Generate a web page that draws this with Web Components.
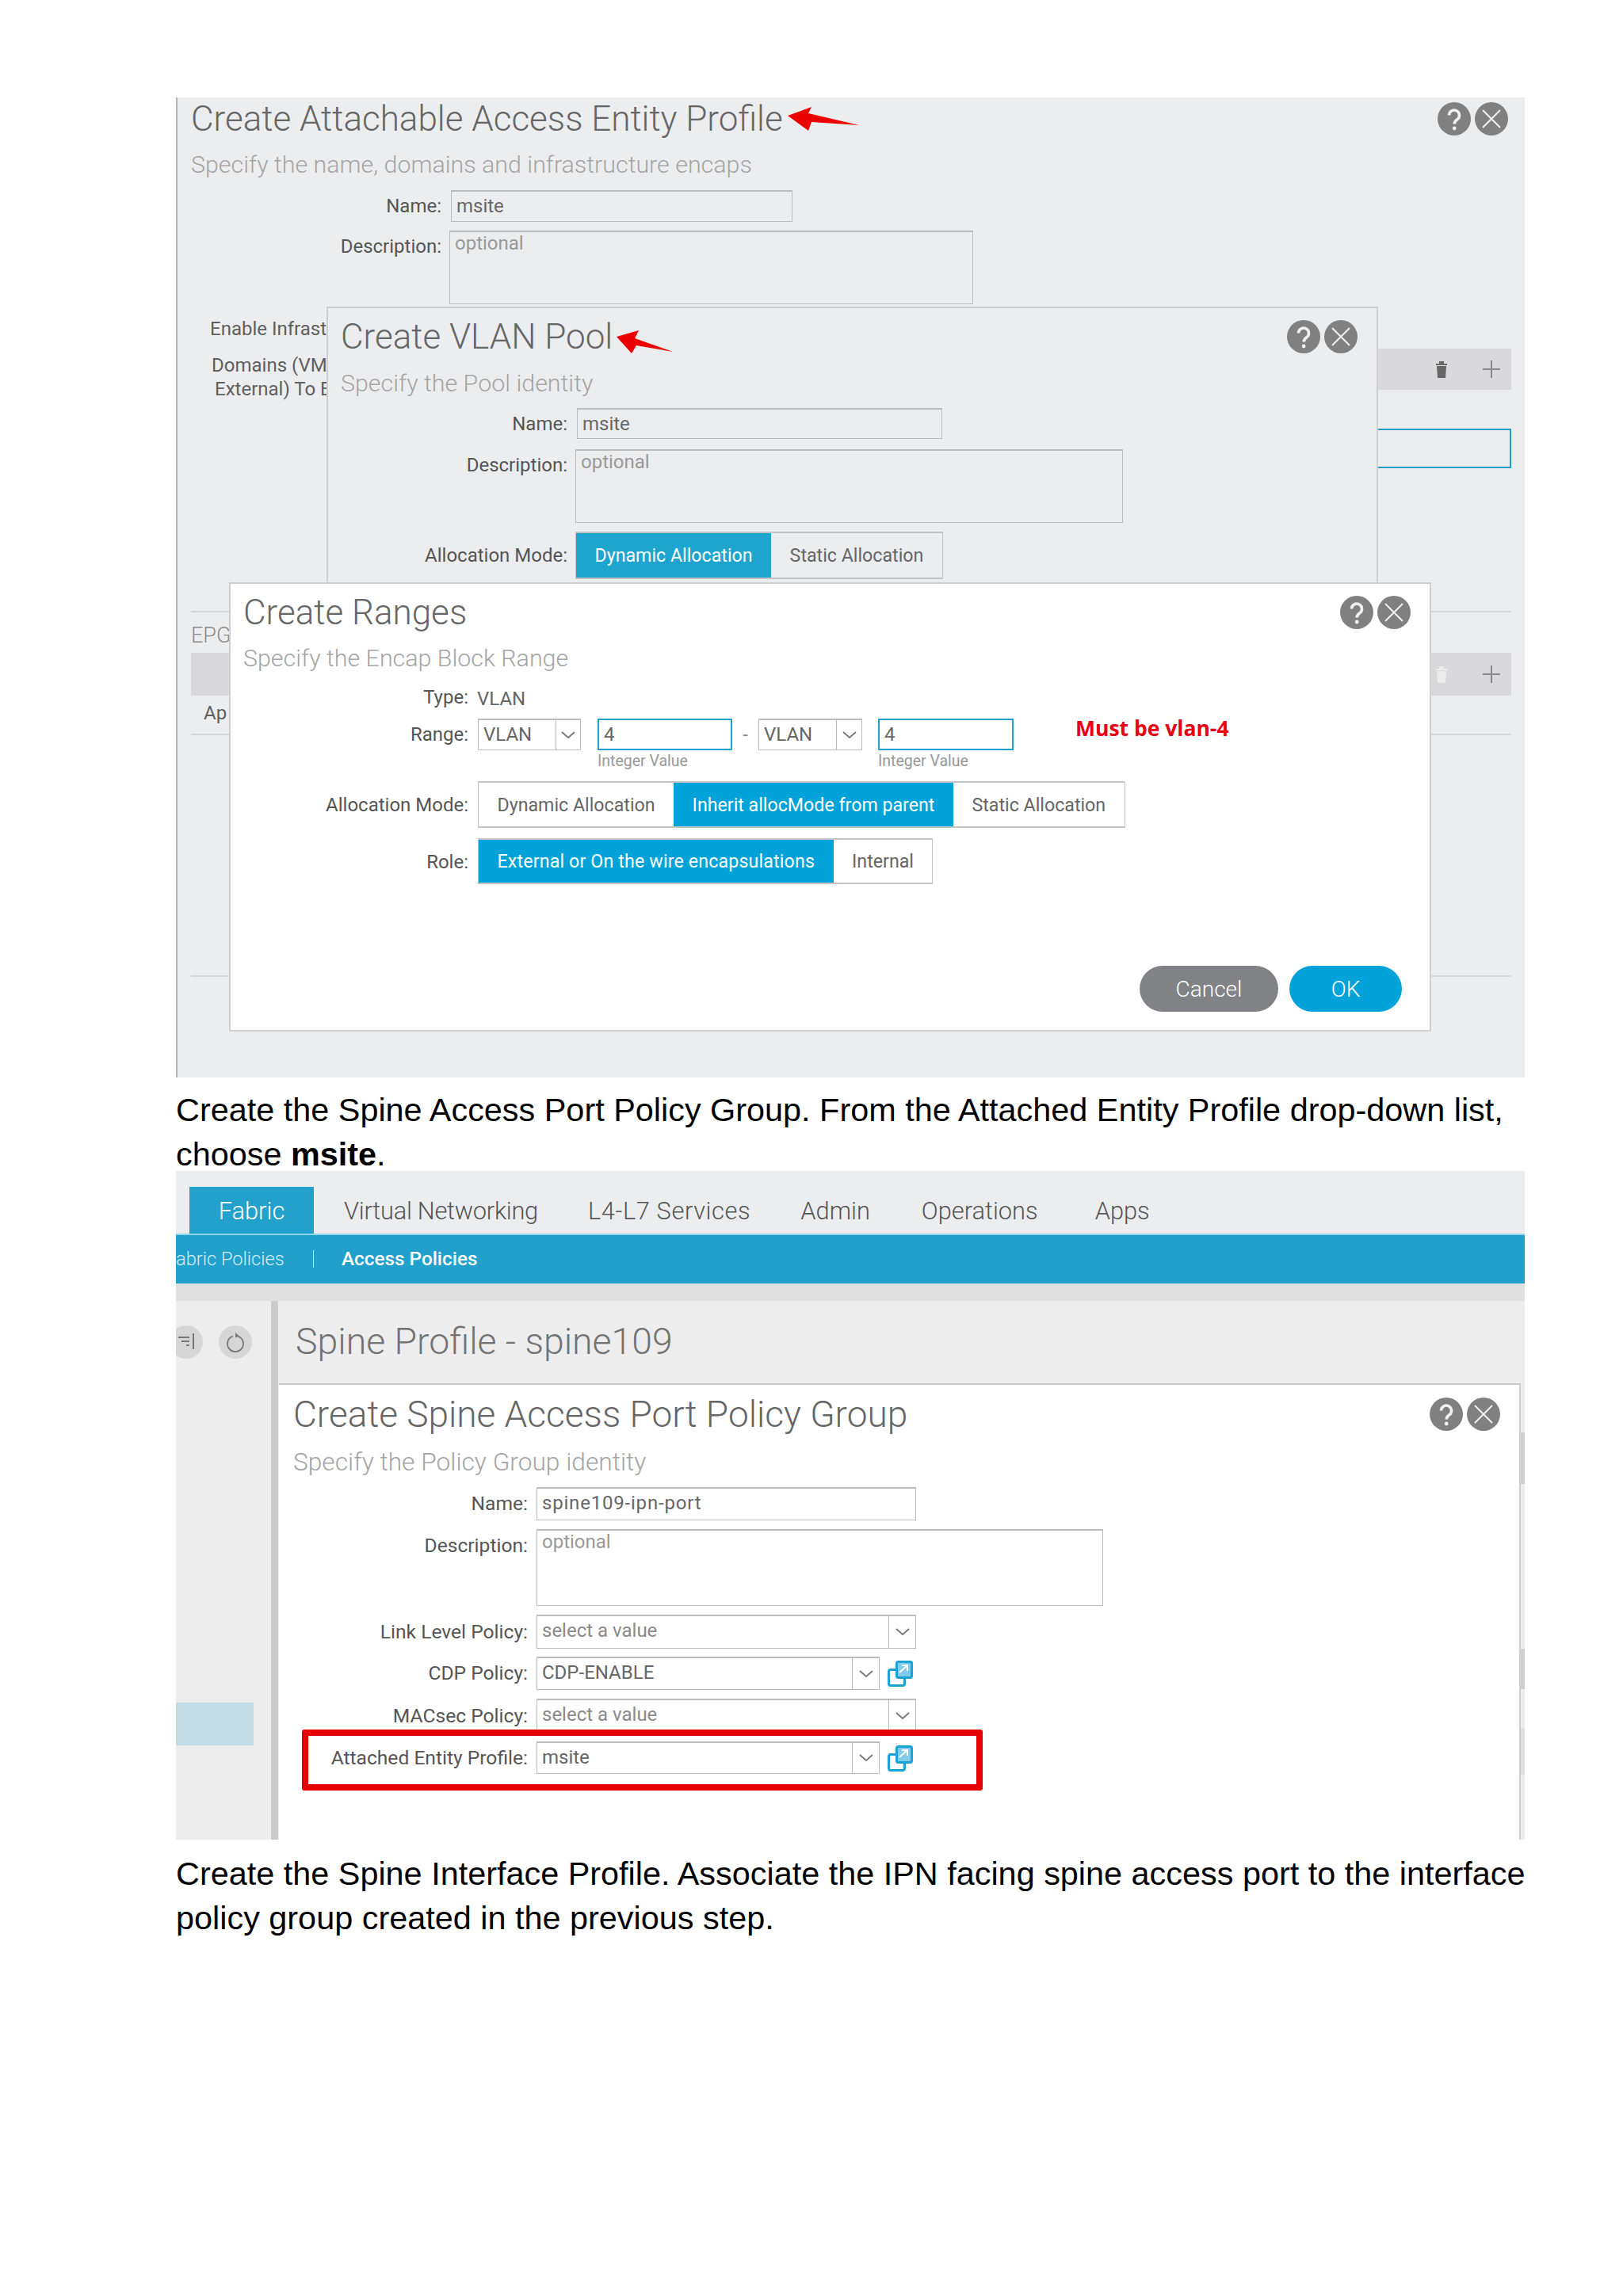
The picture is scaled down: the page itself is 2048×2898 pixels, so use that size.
<!DOCTYPE html>
<html>
<head>
<meta charset="utf-8">
<title>Spine access port policy group</title>
<style>
  html, body { margin: 0; background: #fff; }
</style>
</head>
<body>
<doc-page>
  <aci-panel class="first">
    <aci-dialog heading="Create Attachable Access Entity Profile" sub="Specify the name, domains and infrastructure encaps" arrow="tall" flat
      style="--pt:3px;--sg:14px;--sb:12px;--pl:17px;--pr:17px;--ir:4px;--lw:316px;--cg:10px">
      <aci-row label="Name:"><aci-input value="msite" style="width:431px;height:40px;margin-left:2px"></aci-input></aci-row>
      <aci-row label="Description:" style="margin-top:11px"><aci-input placeholder="optional" area style="width:661px;height:93px"></aci-input></aci-row>
      <aci-caption style="margin:19px 0 0 24px">Enable Infrast</aci-caption>
      <div style="display:grid;grid-template-columns:316px 1fr;column-gap:10px;margin-top:19px">
        <div>
          <aci-caption style="margin-left:26px;line-height:30px">Domains (VMI</aci-caption>
          <aci-caption style="margin-left:30px;line-height:30px">External) To E</aci-caption>
        </div>
        <div style="margin-top:-6px">
          <aci-toolbar></aci-toolbar>
          <aci-input focus style="display:block;height:50px;margin-top:49px"></aci-input>
        </div>
      </div>
      <aci-rule style="margin-top:180px"></aci-rule>
      <aci-caption muted style="margin-top:17px">EPG</aci-caption>
      <aci-toolbar faded style="margin-top:10px;height:54px"></aci-toolbar>
      <aci-caption style="margin:10px 0 0 16px">Ap</aci-caption>
      <aci-rule style="margin-top:14px"></aci-rule>
      <aci-rule style="margin-top:303px"></aci-rule>
    </aci-dialog>

    <aci-dialog heading="Create VLAN Pool" sub="Specify the Pool identity" arrow="short" overlay
      style="left:188px;top:264px;width:1327px;height:360px;--pt:12px;--sg:15px;--sb:11px;--pl:16px;--pr:22px;--ir:2px;--lw:286px;--cg:10px">
      <aci-row label="Name:"><aci-input value="msite" style="width:461px;height:39px;margin-left:2px"></aci-input></aci-row>
      <aci-row label="Description:" style="margin-top:12px"><aci-input placeholder="optional" area style="width:691px;height:93px"></aci-input></aci-row>
      <aci-row label="Allocation Mode:" style="margin-top:11px;--h:60px">
        <aci-seg style="height:60px;--on:#1ea5cf">
          <aci-seg-btn active>Dynamic Allocation</aci-seg-btn>
          <aci-seg-btn>Static Allocation</aci-seg-btn>
        </aci-seg>
      </aci-row>
    </aci-dialog>

    <aci-dialog heading="Create Ranges" sub="Specify the Encap Block Range" overlay white
      style="left:65px;top:612px;width:1517px;height:567px;--pt:12px;--sg:14px;--sb:17px;--pl:16px;--pr:22px;--ir:2px;--lw:284px;--cg:12px">
      <aci-row label="Type:" style="--h:24px"><span style="color:#666;margin-left:-1px">VLAN</span></aci-row>
      <aci-row label="Range:" style="margin-top:11px">
        <div style="display:flex;align-items:flex-start">
          <aci-select value="VLAN" style="width:130px;height:40px;--cw:31px"></aci-select>
          <aci-input focus value="4" hint="Integer Value" style="width:170px;height:40px;margin-left:21px"></aci-input>
          <span style="width:33px;text-align:center;line-height:40px;color:#888">-</span>
          <aci-select value="VLAN" style="width:131px;height:40px;--cw:32px"></aci-select>
          <aci-input focus value="4" hint="Integer Value" style="width:171px;height:40px;margin-left:20px"></aci-input>
          <red-note style="margin-left:78px">Must be vlan-4</red-note>
        </div>
      </aci-row>
      <aci-row label="Allocation Mode:" style="margin-top:39px;--h:60px">
        <aci-seg style="height:59px">
          <aci-seg-btn>Dynamic Allocation</aci-seg-btn>
          <aci-seg-btn active>Inherit allocMode from parent</aci-seg-btn>
          <aci-seg-btn>Static Allocation</aci-seg-btn>
        </aci-seg>
      </aci-row>
      <aci-row label="Role:" style="margin-top:12px;--h:60px">
        <aci-seg style="height:58px">
          <aci-seg-btn active style="letter-spacing:.15px">External or On the wire encapsulations</aci-seg-btn>
          <aci-seg-btn>Internal</aci-seg-btn>
        </aci-seg>
      </aci-row>
      <div slot="footer" style="display:flex;gap:14px;justify-content:flex-end">
        <aci-button style="width:175px;background:#808285">Cancel</aci-button>
        <aci-button style="width:142px;background:#00a3d9">OK</aci-button>
      </div>
    </aci-dialog>
  </aci-panel>

  <doc-para style="margin:14px -12px -7px 0"><span style="display:block">Create the Spine Access Port Policy Group. From the Attached Entity Profile drop-down list,</span><span style="display:block">choose <b>msite</b>.</span></doc-para>

  <aci-panel>
    <aci-tabs>
      <aci-tab active>Fabric</aci-tab>
      <aci-tab style="letter-spacing:-.25px">Virtual Networking</aci-tab>
      <aci-tab style="letter-spacing:.6px">L4-L7 Services</aci-tab>
      <aci-tab>Admin</aci-tab>
      <aci-tab style="margin-left:2px">Operations</aci-tab>
      <aci-tab style="margin-left:9px">Apps</aci-tab>
    </aci-tabs>
    <aci-subnav></aci-subnav>
    <aci-workspace heading="Spine Profile - spine109">
      <aci-dialog heading="Create Spine Access Port Policy Group" sub="Specify the Policy Group identity" white topline
        style="height:576px;--pt:13px;--sg:17px;--sb:11px;--pl:18px;--pr:22px;--ir:2px;--lw:296px;--cg:11px;--tf:46px;--sf:31.7px;--lf:24.6px">
        <aci-row label="Name:" style="--h:42px"><aci-input value="spine109-ipn-port" tight style="width:479px;height:42px"></aci-input></aci-row>
        <aci-row label="Description:" style="margin-top:11px;--h:42px"><aci-input placeholder="optional" area style="width:715px;height:97px"></aci-input></aci-row>
        <aci-row label="Link Level Policy:" style="margin-top:11px;--h:43px"><aci-select muted value="select a value" style="width:479px;height:43px;--cw:34px"></aci-select></aci-row>
        <aci-row label="CDP Policy:" style="margin-top:10px;--h:42px"><aci-select value="CDP-ENABLE" link style="width:433px;height:42px;--cw:34px"></aci-select></aci-row>
        <aci-row label="MACsec Policy:" style="margin-top:11px;--h:43px"><aci-select muted value="select a value" style="width:479px;height:43px;--cw:34px"></aci-select></aci-row>
        <aci-row label="Attached Entity Profile:" style="margin-top:11px;--h:41px"><aci-select value="msite" link style="width:433px;height:41px;--cw:34px"></aci-select></aci-row>
        <red-frame style="left:29px;top:435px;width:859px;height:77px"></red-frame>
      </aci-dialog>
    </aci-workspace>
  </aci-panel>

  <doc-para style="margin:16px -12px 0 0"><span style="display:block">Create the Spine Interface Profile. Associate the IPN facing spine access port to the interface</span><span style="display:block">policy group created in the previous step.</span></doc-para>
</doc-page>

<script>
const UI_FONT = `Roboto, "Open Sans", "Liberation Sans", sans-serif`;

// every component renders on connect, attributes are read from the tag
function define(tag, css, render) {
  customElements.define(tag, class extends HTMLElement {
    connectedCallback() {
      if (this.shadowRoot) return;
      const tpl = document.createElement('template');
      tpl.innerHTML = `<style>${css}</style>` + render(this);
      this.attachShadow({ mode: 'open' }).appendChild(tpl.content.cloneNode(true));
    }
  });
}
const attr = (el, name, def = '') => el.hasAttribute(name) ? el.getAttribute(name) : def;

define('doc-page', `
  :host { display: block; box-sizing: border-box; width: 2048px; height: 2898px; padding: 123px 124px 0 222px; overflow: hidden; background: #fff; }
`, () => `<slot></slot>`);

define('doc-para', `
  :host { display: block; font: 41.4px/55.5px "Liberation Sans", Arial, sans-serif; color: #000; position: relative; z-index: 2; white-space: nowrap; }
`, () => `<slot></slot>`);

define('aci-panel', `
  :host { display: block; position: relative; background: #ecedef; overflow: hidden; font: 24px ${UI_FONT}; color: #5a5a5a; }
  :host(.first) { height: 1237px; border-left: 2px solid #b4b4b4; box-sizing: border-box; }
`, () => `<slot></slot>`);

const iconHelp = `<svg width="42" height="42" viewBox="0 0 42 42"><circle cx="21" cy="21" r="21" fill="#808080"/><path d="M14.5 16.5a6.5 6.5 0 1 1 10.3 5.3c-2.6 1.9-3.6 2.9-3.6 5.6" fill="none" stroke="#f0f0f0" stroke-width="3.6"/><circle cx="21.2" cy="33" r="2.4" fill="#f0f0f0"/></svg>`;
const iconClose = `<svg width="42" height="42" viewBox="0 0 42 42"><circle cx="21" cy="21" r="21" fill="#808080"/><path d="M10 10l22 22M32 10L10 32" stroke="#f0f0f0" stroke-width="2"/></svg>`;
const arrows = {
  tall: `<svg width="92" height="32" viewBox="0 0 92 32" style="margin:8px 0 0 6px;flex:none"><path d="M0 12L30 1l-4 8 64 15-60-4-4 11z" fill="#ec0000"/></svg>`,
  short: `<svg width="73" height="32" viewBox="0 0 73 32" style="margin:16px 0 0 5px;flex:none"><path d="M0 8L28 0l-5 10 48 17-46-8-6 10z" fill="#ec0000"/></svg>`
};

define('aci-dialog', `
  :host { display: flex; flex-direction: column; box-sizing: border-box; position: relative; padding: var(--pt) var(--pr) 0 var(--pl); background: #ecedef; }
  :host([overlay]) { position: absolute; border: 2px solid #cfcfd1; }
  :host([white]) { background: #fff; }
  :host([topline]) { border-top: 2px solid #c8c8c8; border-right: 2px solid #d0d0d0; padding-top: 13px; }
  :host([flat]) { background: transparent; }
  header { display: flex; height: 48px; align-items: flex-start; }
  h2 { margin: 0; font: 300 var(--tf, 44px)/48px ${UI_FONT}; color: #666; white-space: nowrap; }
  .tools { margin: 3px var(--ir) 0 auto; display: flex; gap: 5px; }
  .sub { margin: var(--sg) 0 var(--sb); font: 300 var(--sf, 30.4px)/40px ${UI_FONT}; color: #a4a4a4; white-space: nowrap; }
  .foot { margin-top: auto; padding: 0 13px 23px 0; }
`, el => `
  <header>
    <h2>${attr(el, 'heading')}</h2>${arrows[attr(el, 'arrow')] || ''}
    <div class="tools">${iconHelp}${iconClose}</div>
  </header>
  <div class="sub">${attr(el, 'sub')}</div>
  <slot></slot>
  <div class="foot"><slot name="footer"></slot></div>`);

define('aci-row', `
  :host { display: grid; grid-template-columns: var(--lw) 1fr; column-gap: var(--cg); align-items: start; }
  label { text-align: right; font-size: var(--lf, 24px); line-height: var(--h, 40px); white-space: nowrap; color: #555; }
`, el => `<label>${attr(el, 'label')}</label><div><slot></slot></div>`);

define('aci-input', `
  :host { display: inline-block; vertical-align: top; box-sizing: border-box; position: relative; }
  .box { box-sizing: border-box; height: 100%; border: 1.5px solid #bcbcbc; border-top-width: 2px; padding: 0 6px; line-height: 36px; color: #666; white-space: nowrap; }
  :host([area]) .box { line-height: 28px; }
  :host([tight]) .box { letter-spacing: .8px; }
  .ph { color: #999; }
  :host([focus]) .box { border: 2px solid #1f9fcb; }
  .hint { position: absolute; left: 0; top: 100%; margin-top: 3px; font-size: 19.5px; line-height: 22px; color: #999; white-space: nowrap; }
`, el => `
  <div class="box">${attr(el, 'value') ? attr(el, 'value') : `<span class="ph">${attr(el, 'placeholder')}</span>`}</div>
  ${el.hasAttribute('hint') ? `<div class="hint">${attr(el, 'hint')}</div>` : ''}`);

define('aci-select', `
  :host { display: inline-flex; vertical-align: top; position: relative; box-sizing: border-box; }
  .box { flex: 1; display: flex; box-sizing: border-box; border: 1.5px solid #bcbcbc; border-top-width: 2px; height: 100%; background: inherit; }
  .val { flex: 1; padding: 0 6px; line-height: 36px; color: #666; white-space: nowrap; overflow: hidden; }
  :host([muted]) .val { color: #8a8a8a; }
  .caret { width: var(--cw); border-left: 1.5px solid #bcbcbc; display: flex; align-items: center; justify-content: center; box-sizing: border-box; }
  .link { position: absolute; left: 100%; top: 5px; margin-left: 10px; }
`, el => `
  <div class="box">
    <div class="val">${attr(el, 'value')}</div>
    <div class="caret"><svg width="18" height="10" viewBox="0 0 18 10"><path d="M1 1l8 7 8-7" fill="none" stroke="#777" stroke-width="1.8"/></svg></div>
  </div>
  ${el.hasAttribute('link') ? `<svg class="link" width="32" height="33" viewBox="0 0 32 33">
    <rect x="1.5" y="11.5" width="20" height="20" rx="2.5" fill="#fff" stroke="#18a2d6" stroke-width="3"/>
    <rect x="11.5" y="1.5" width="19" height="20" rx="2" fill="#7fcbe8" stroke="#18a2d6" stroke-width="3"/>
    <path d="M15 15l10-9M18 6h7v7" fill="none" stroke="#fff" stroke-width="2"/>
  </svg>` : ''}`);

define('aci-seg', `
  :host { display: inline-flex; vertical-align: top; box-sizing: border-box; border: 1.5px solid #c4c4c4; border-top-width: 2px; border-bottom-width: 2px; }
`, () => `<slot></slot>`);

define('aci-seg-btn', `
  :host { display: flex; align-items: center; padding: 0 23.5px; white-space: nowrap; color: #666; font-size: 23.2px; }
  :host([active]) { background: var(--on, #00a3d9); color: #fff; }
`, () => `<slot></slot>`);

define('aci-button', `
  :host { display: flex; align-items: center; justify-content: center; height: 58px; border-radius: 29px; color: #fff; font-size: 28px; font-weight: 300; }
`, () => `<slot></slot>`);

define('red-note', `
  :host { display: block; font: bold 26.5px/24px "Open Sans", "Liberation Sans", sans-serif; color: #e60012; white-space: nowrap; }
`, () => `<slot></slot>`);

define('red-frame', `
  :host { position: absolute; box-sizing: border-box; border: 8px solid #e60000; border-radius: 3px; }
`, () => ``);

define('aci-toolbar', `
  :host { display: flex; align-items: center; justify-content: flex-end; gap: 44px; height: 52px; background: #d9d9db; padding-right: 14px; }
  .trash { fill: #666; }
  :host([faded]) .trash { fill: #ececec; }
`, () => `
  <svg width="16" height="24" viewBox="0 0 16 24"><path class="trash" d="M1 5h14v2H1zM5 2h6v3H5zM2 8h12l-1 15H3z"/></svg>
  <svg width="22" height="22" viewBox="0 0 22 22"><path d="M11 0v22M0 11h22" stroke="#888" stroke-width="2"/></svg>`);

define('aci-rule', `
  :host { display: block; height: 2px; background: #d6d6d8; }
`, () => ``);

define('aci-caption', `
  :host { display: block; line-height: 24px; color: #5f5f5f; white-space: nowrap; }
  :host([muted]) { color: #8a8a8a; font-size: 27px; font-weight: 300; }
`, () => `<slot></slot>`);

define('aci-tabs', `
  :host { display: flex; padding: 20px 0 0 17px; height: 79px; box-sizing: border-box; column-gap: 63px; }
`, () => `<slot></slot>`);

define('aci-tab', `
  :host { display: block; font: 300 30.8px/62px ${UI_FONT}; color: #555; white-space: nowrap; }
  :host([active]) { background: #22a1cc; color: #fff; width: 157px; text-align: center; margin-right: -25px; }
`, () => `<slot></slot>`);

define('aci-subnav', `
  :host { display: flex; align-items: center; height: 63px; background: #21a0cc; border-top: 2px solid #8fd3ea; box-sizing: border-box; font-size: 24.3px; white-space: nowrap; color: #fff; padding-bottom: 2px; }
  .a { width: 136px; text-align: right; color: #d7eef6; flex: none; font-weight: 300; font-size: 23.6px; }
  i { width: 1px; height: 22px; background: #cfecf6; margin: 0 35px 0 37px; flex: none; }
  b { font-weight: 500; }
`, () => `<span class="a">abric Policies</span><i></i><b>Access Policies</b>`);

define('aci-workspace', `
  :host { display: block; background: #ededed; }
  .band { height: 22px; background: #e0e0e0; }
  .body { display: flex; height: 680px; }
  .rail { width: 120px; flex: none; overflow: hidden; }
  .btns { display: flex; gap: 20px; margin: 31px 0 0 -8px; }
  .sel { height: 54px; background: #c2dbe6; margin-top: 434px; margin-right: 22px; }
  .bar { width: 9px; flex: none; background: #cbcbcb; }
  .main { flex: 1; min-width: 0; display: flex; flex-direction: column; }
  h1 { margin: 0; height: 104px; padding-left: 22px; font: 300 46.4px/102px ${UI_FONT}; color: #737373; white-space: nowrap; box-sizing: border-box; }
  .split { display: flex; }
  .wrap { flex: 1; min-width: 0; margin-left: 1px; }
  .gutter { width: 5px; flex: none; display: flex; flex-direction: column; background: #ecedef; }
  .gutter span { display: block; background: #cfcfd1; flex: none; }
`, el => `
  <div class="band"></div>
  <div class="body">
    <div class="rail">
      <div class="btns">
        <svg width="42" height="42" viewBox="0 0 42 42"><circle cx="21" cy="21" r="21" fill="#d6d6d6"/><path d="M11 15h14M15 20h10M21 25h4M30 10v20" stroke="#777" stroke-width="2" fill="none"/></svg>
        <svg width="42" height="42" viewBox="0 0 42 42"><circle cx="21" cy="21" r="21" fill="#d6d6d6"/><path d="M24 13.5a10 10 0 1 1-6 0" stroke="#777" stroke-width="1.8" fill="none"/><path d="M21 9l5 4.5-5 2z" fill="#777"/></svg>
      </div>
      <div class="sel"></div>
    </div>
    <div class="bar"></div>
    <div class="main">
      <h1>${attr(el, 'heading')}</h1>
      <div class="split">
        <div class="wrap"><slot></slot></div>
        <div class="gutter">
          <span style="height:65px;margin-top:62px"></span>
          <span style="height:51px;margin-top:208px"></span>
          <span style="height:58px;margin-top:50px;background:#dedee0"></span>
        </div>
      </div>
    </div>
  </div>`);
</script>
</body>
</html>
